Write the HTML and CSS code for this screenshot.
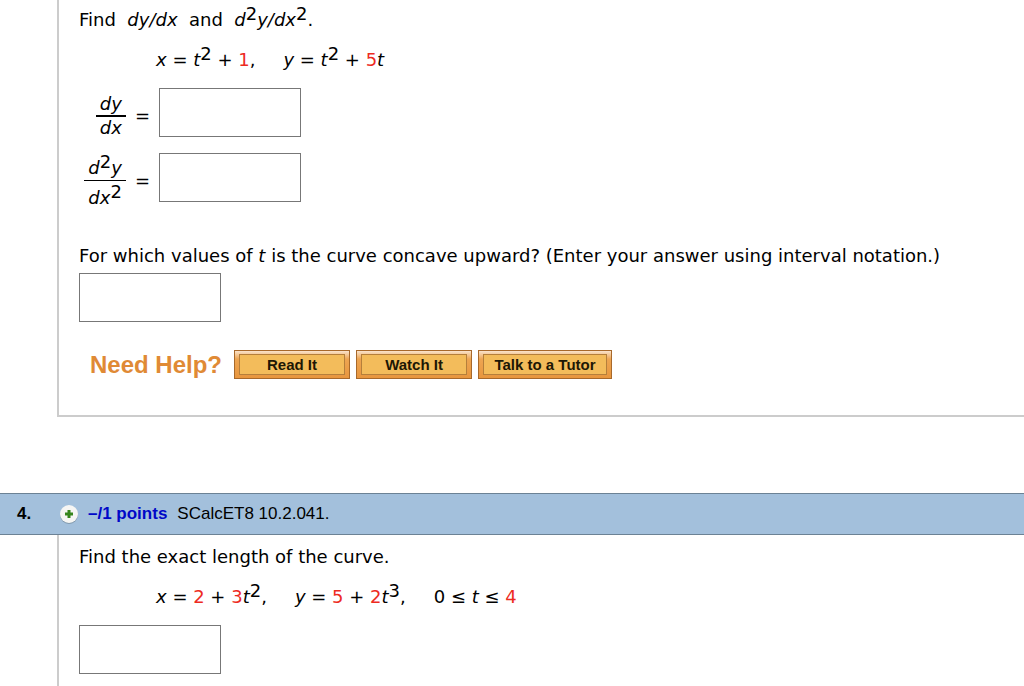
FILE: index.html
```
<!DOCTYPE html>
<html lang="en">
<head>
  <meta charset="UTF-8" />
  <title>Homework - Parametric Curves</title>
  <link rel="stylesheet" href="styles.css">
</head>
<body>
  <section class="question">
    <p>Find&nbsp; <i>dy/dx</i>&nbsp; and&nbsp; <i>d</i><sup>2</sup><i>y/dx</i><sup>2</sup>.</p>
    <p class="equation">
      <span><i>x</i> = <i>t</i><sup>2</sup> + <b>1</b>,</span>
      <span><i>y</i> = <i>t</i><sup>2</sup> + <b>5</b><i>t</i></span>
    </p>

    <div class="answer-row">
      <label for="first">
        <span class="fraction"><span class="top"><i>dy</i></span><span><i>dx</i></span></span>
        <span>=</span>
      </label>
      <input type="text" id="first" />
    </div>
    <div class="answer-row">
      <label for="second">
        <span class="fraction tall"><span class="top"><i>d</i><sup>2</sup><i>y</i></span><span><i>dx</i><sup>2</sup></span></span>
        <span>=</span>
      </label>
      <input type="text" id="second" />
    </div>

    <label class="prompt" for="concave">For which values of <i>t</i> is the curve concave upward? (Enter your answer using interval notation.)</label>
    <input type="text" id="concave" />

    <div class="help">
      <span class="help-title">Need Help?</span>
      <button type="button"><span>Read It</span></button>
      <button type="button"><span>Watch It</span></button>
      <button type="button" class="wide"><span>Talk to a Tutor</span></button>
    </div>
  </section>

  <header class="question-bar">
    <span class="number">4.</span>
    <button type="button" class="expand" aria-label="Expand">
      <svg width="20" height="20" viewBox="0 0 20 20">
        <circle cx="10" cy="11" r="9" fill="#8299ad" />
        <circle cx="10" cy="10" r="9" fill="#f6f6f4" />
        <path d="M10 6v8M6 10h8" stroke="#36851d" stroke-width="3" />
      </svg>
    </button>
    <a href="#length">–/1 points</a>
    <span>SCalcET8 10.2.041.</span>
  </header>

  <section class="question next">
    <label class="prompt" for="length">Find the exact length of the curve.</label>
    <p class="equation">
      <span><i>x</i> = <b>2</b> + <b>3</b><i>t</i><sup>2</sup>,</span>
      <span><i>y</i> = <b>5</b> + <b>2</b><i>t</i><sup>3</sup>,</span>
      <span>0 ≤ <i>t</i> ≤ <b>4</b></span>
    </p>
    <input type="text" id="length" />
  </section>
</body>
</html>
```

FILE: styles.css
```
* {
  box-sizing: border-box;
}

body {
  margin: 0;
  background: #fff;
  color: #000;
  font-family: Verdana, "DejaVu Sans", sans-serif;
  font-size: 18px;
  line-height: 24px;
}

.question {
  margin-left: 57px;
  padding: 8px 0 36px 20px;
  border-left: 2px solid #ccc;
  border-bottom: 2px solid #ccc;
}

.question.next {
  padding-top: 10px;
  padding-bottom: 12px;
  border-bottom: none;
}

p {
  margin: 0;
}

sup {
  font-size: 18px;
  line-height: 0;
  vertical-align: 6px;
}

b {
  color: #ed2b1f;
  font-weight: normal;
}

.equation {
  display: flex;
  flex-wrap: wrap;
  gap: 28px;
  margin: 16px 0 16px 77px;
}

input {
  display: block;
  width: 142px;
  height: 49px;
  padding: 4px 8px;
  border: 1px solid #777;
  background: #fff;
  font: inherit;
}

.answer-row {
  display: flex;
  align-items: center;
  height: 49px;
  margin-bottom: 16px;
}

.answer-row label {
  display: flex;
  align-items: center;
  justify-content: flex-end;
  gap: 9px;
  width: 80px;
  padding-right: 9px;
  padding-top: 6px;
}

.fraction {
  display: flex;
  flex-direction: column;
  line-height: 22px;
  text-align: center;
}

.fraction .top {
  padding: 0 4px;
  border-bottom: 2px solid #000;
}

.fraction.tall {
  line-height: 34px;
}

.fraction.tall .top {
  padding: 10px 4px 0;
  border-bottom-width: 1px;
  line-height: 24px;
}

.prompt {
  display: block;
}

.answer-row + .prompt {
  margin: 42px 0 5px;
}

.help {
  display: flex;
  align-items: center;
  gap: 6px;
  margin: 28px 0 0 11px;
}

.help-title {
  margin-right: 6px;
  color: #e08a35;
  font: bold 24px/28px "Liberation Sans", Arial, sans-serif;
}

.help button {
  width: 116px;
  height: 29px;
  padding: 3px 4px;
  border: 1px solid #a8692b;
  background: linear-gradient(#fae3cb, #eda552 30%, #e8963e);
  color: #1d1705;
  font: bold 15px/19px "Liberation Sans", Arial, sans-serif;
  cursor: pointer;
}

.help button.wide {
  width: 134px;
}

.help button span {
  display: block;
  border: 1px solid #b57f3b;
  background: #f3bc5b;
}

.question-bar {
  display: flex;
  align-items: center;
  height: 42px;
  margin-top: 76px;
  padding-left: 17px;
  border-top: 1px solid #6c8295;
  border-bottom: 1px solid #6c8295;
  background: #a3c0dc;
  font: 17px/24px "Liberation Sans", Arial, sans-serif;
}

.number {
  width: 42px;
  font-weight: bold;
}

.expand {
  display: flex;
  padding: 0;
  border: none;
  background: none;
  cursor: pointer;
}

.question-bar a {
  margin: 0 10px 0 9px;
  color: #0008c8;
  font-weight: bold;
  text-decoration: none;
}
```
